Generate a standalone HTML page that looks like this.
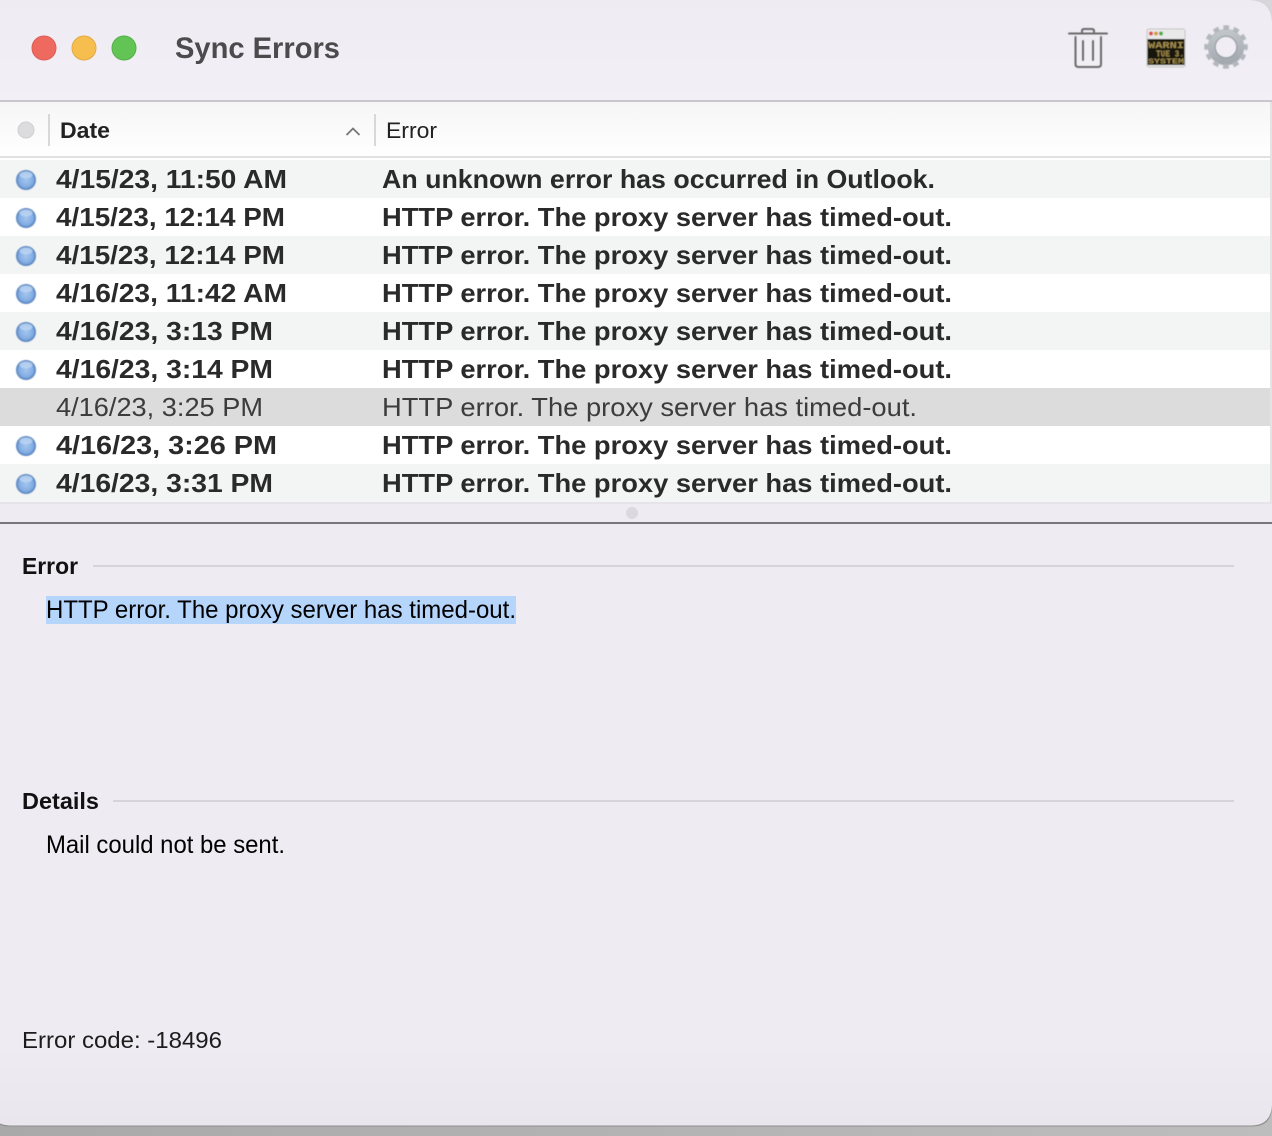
<!DOCTYPE html>
<html><head><meta charset="utf-8"><title>Sync Errors</title>
<style>html,body{margin:0;padding:0;width:1272px;height:1136px;overflow:hidden;background:#fff}svg{display:block}text{font-family:"Liberation Sans",sans-serif;white-space:pre}.b{font-size:26px;font-weight:700;fill:#2a2a2a}.r{font-size:26px;font-weight:400;fill:#3c3c3c}.m{font-family:"Liberation Mono",monospace;font-weight:700;fill:#a58e4e}</style></head>
<body>
<svg width="1272" height="1136" viewBox="0 0 1272 1136" xmlns="http://www.w3.org/2000/svg">
<defs>
<linearGradient id="bot" x1="0" x2="1" y1="0" y2="0"><stop offset="0" stop-color="#a9a9a9"/><stop offset="1" stop-color="#bdbdbd"/></linearGradient>
<linearGradient id="top" x1="0" x2="0" y1="0" y2="1"><stop offset="0" stop-color="#efebf3"/><stop offset="1" stop-color="#f2eff6"/></linearGradient>
<linearGradient id="hd" x1="0" x2="0" y1="0" y2="1"><stop offset="0" stop-color="#f6f6f6"/><stop offset=".6" stop-color="#fbfbfb"/><stop offset="1" stop-color="#ffffff"/></linearGradient>
<linearGradient id="win" x1="0" x2="0" y1="0" y2="1"><stop offset="0" stop-color="#eeebf2"/><stop offset=".93" stop-color="#eeebf2"/><stop offset="1" stop-color="#e9e6ed"/></linearGradient>
<radialGradient id="dot" cx=".5" cy=".5" r=".52"><stop offset="0" stop-color="#a4c5ee"/><stop offset=".68" stop-color="#82ade3"/><stop offset="1" stop-color="#4a76b2"/></radialGradient>
<linearGradient id="gear" x1="0" x2="0" y1="0" y2="1"><stop offset="0" stop-color="#c0c5ca"/><stop offset="1" stop-color="#a3a9af"/></linearGradient>
<filter id="s1" x="-20%" y="-20%" width="140%" height="140%"><feGaussianBlur stdDeviation="0.5"/></filter>
<filter id="s2" x="-20%" y="-20%" width="140%" height="140%"><feGaussianBlur stdDeviation="0.7"/></filter>
<g id="d" filter="url(#s1)"><circle cx="26" cy="20" r="10" fill="url(#dot)"/><ellipse cx="26" cy="15" rx="6.500" ry="3.500" fill="#c4dcf6" opacity=".7"/></g>
</defs>
<rect width="1272" height="1136" fill="url(#bot)"/>
<path d="M-10 0H1248Q1272 0 1272 24V1106Q1272 1126.500 1252 1126.500H10Q-10 1126.500 -10 1106Z" fill="#8e8e8e"/>
<path d="M-10 0H1248Q1272 0 1272 24V1105Q1271 1125 1252 1125.500H10Q-10 1125 -10 1105Z" fill="url(#win)"/>
<path d="M1248 0Q1272 0 1272 24V0Z" fill="#d8d6da"/>
<path d="M0 0H1248Q1272 0 1272 24V100H0Z" fill="url(#top)"/>
<rect y="100" width="1272" height="2" fill="#c9c7cd"/>

<circle cx="44" cy="48" r="12" fill="#ee6a5f" stroke="#dd5d52" stroke-width="1"/>
<circle cx="84" cy="48" r="12" fill="#f6bd4f" stroke="#e4a93f" stroke-width="1"/>
<circle cx="124" cy="48" r="12" fill="#61c454" stroke="#54b048" stroke-width="1"/>
<text x="175" y="58" font-size="30" font-weight="700" fill="#4b4b4e" textLength="165" lengthAdjust="spacingAndGlyphs">Sync Errors</text>

<g fill="none" stroke="#6a6a6a" stroke-width="2" stroke-linecap="round" stroke-linejoin="round" filter="url(#s1)">
<path d="M1069 33.500H1107"/>
<path d="M1082 33V31Q1082 29 1084 29H1092Q1094 29 1094 31V33"/>
<path d="M1075.500 37V64Q1075.500 67 1078.500 67H1098Q1101 67 1101 64V37"/>
<path d="M1083 41V60M1093 41V60"/>
</g>

<g filter="url(#s1)">
<rect x="1147" y="29" width="38" height="38" rx="2" fill="#e9e9ea" stroke="#c4c4c4" stroke-width="1"/>
<rect x="1147.500" y="39" width="37" height="26" fill="#17150f"/>
<circle cx="1151" cy="33.500" r="2" fill="#d9524a"/><circle cx="1156" cy="33.500" r="2" fill="#d99a3a"/><circle cx="1161" cy="33.500" r="2" fill="#55a84a"/>
<text class="m" x="1148" y="48" font-size="9" textLength="36" lengthAdjust="spacingAndGlyphs">WARNI</text>
<text class="m" x="1156" y="56.500" font-size="9" textLength="28" lengthAdjust="spacingAndGlyphs">TUE 3.</text>
<text class="m" x="1148" y="63.500" font-size="7" textLength="36" lengthAdjust="spacingAndGlyphs">SYSTEM</text>
</g>

<g fill="none" transform="rotate(-8 1226 47)" filter="url(#s1)">
<circle cx="1226" cy="47" r="14.500" stroke="url(#gear)" stroke-width="7.500"/>
<circle cx="1226" cy="47" r="19.500" stroke="#b2b7bc" stroke-width="4.500" stroke-dasharray="5.600 4.610"/>
<circle cx="1226" cy="47" r="10.800" stroke="#8e949a" stroke-width="1"/>
</g>

<rect y="102" width="1270" height="54" fill="url(#hd)"/>
<rect y="156" width="1270" height="2" fill="#e1e1e1"/>
<rect y="158" width="1270" height="2" fill="#fff"/>
<circle cx="26" cy="130" r="8" fill="#dcdcde" stroke="#cfcfd1" stroke-width="1"/>
<rect x="48" y="114" width="2" height="32" fill="#d8d8d8"/>
<rect x="374" y="114" width="2" height="32" fill="#d8d8d8"/>
<text x="60" y="138" font-size="22" font-weight="700" fill="#222" textLength="50" lengthAdjust="spacingAndGlyphs">Date</text>
<path d="M346.500 135L353 128.500L359.500 135" fill="none" stroke="#777" stroke-width="1.800"/>
<text x="386" y="138" font-size="22" fill="#222" textLength="51" lengthAdjust="spacingAndGlyphs">Error</text>

<g>
<rect y="160" width="1270" height="38" fill="#f3f5f4"/>
<rect y="198" width="1270" height="38" fill="#fff"/>
<rect y="236" width="1270" height="38" fill="#f3f5f4"/>
<rect y="274" width="1270" height="38" fill="#fff"/>
<rect y="312" width="1270" height="38" fill="#f3f5f4"/>
<rect y="350" width="1270" height="38" fill="#fff"/>
<rect y="388" width="1270" height="38" fill="#dcdcdc"/>
<rect y="426" width="1270" height="38" fill="#fff"/>
<rect y="464" width="1270" height="38" fill="#f3f5f4"/>
<rect x="1270" y="102" width="2" height="400" fill="#e4e4e4"/>
<rect y="502" width="1272" height="2" fill="#e6e4e8"/>
</g>

<use href="#d" y="160"/><use href="#d" y="198"/><use href="#d" y="236"/><use href="#d" y="274"/><use href="#d" y="312"/><use href="#d" y="350"/><use href="#d" y="426"/><use href="#d" y="464"/>

<text class="b" x="56" y="188" textLength="231" lengthAdjust="spacingAndGlyphs">4/15/23, 11:50 AM</text>
<text class="b" x="382" y="188" textLength="553" lengthAdjust="spacingAndGlyphs">An unknown error has occurred in Outlook.</text>
<text class="b" x="56" y="226" textLength="229" lengthAdjust="spacingAndGlyphs">4/15/23, 12:14 PM</text>
<text class="b" x="382" y="226" textLength="570" lengthAdjust="spacingAndGlyphs">HTTP error. The proxy server has timed-out.</text>
<text class="b" x="56" y="264" textLength="229" lengthAdjust="spacingAndGlyphs">4/15/23, 12:14 PM</text>
<text class="b" x="382" y="264" textLength="570" lengthAdjust="spacingAndGlyphs">HTTP error. The proxy server has timed-out.</text>
<text class="b" x="56" y="302" textLength="231" lengthAdjust="spacingAndGlyphs">4/16/23, 11:42 AM</text>
<text class="b" x="382" y="302" textLength="570" lengthAdjust="spacingAndGlyphs">HTTP error. The proxy server has timed-out.</text>
<text class="b" x="56" y="340" textLength="217" lengthAdjust="spacingAndGlyphs">4/16/23, 3:13 PM</text>
<text class="b" x="382" y="340" textLength="570" lengthAdjust="spacingAndGlyphs">HTTP error. The proxy server has timed-out.</text>
<text class="b" x="56" y="378" textLength="217" lengthAdjust="spacingAndGlyphs">4/16/23, 3:14 PM</text>
<text class="b" x="382" y="378" textLength="570" lengthAdjust="spacingAndGlyphs">HTTP error. The proxy server has timed-out.</text>
<text class="r" x="56" y="416" textLength="207" lengthAdjust="spacingAndGlyphs">4/16/23, 3:25 PM</text>
<text class="r" x="382" y="416" textLength="535" lengthAdjust="spacingAndGlyphs">HTTP error. The proxy server has timed-out.</text>
<text class="b" x="56" y="454" textLength="221" lengthAdjust="spacingAndGlyphs">4/16/23, 3:26 PM</text>
<text class="b" x="382" y="454" textLength="570" lengthAdjust="spacingAndGlyphs">HTTP error. The proxy server has timed-out.</text>
<text class="b" x="56" y="492" textLength="217" lengthAdjust="spacingAndGlyphs">4/16/23, 3:31 PM</text>
<text class="b" x="382" y="492" textLength="570" lengthAdjust="spacingAndGlyphs">HTTP error. The proxy server has timed-out.</text>

<circle cx="632" cy="513" r="6" fill="#dbd8df"/>
<rect y="522" width="1272" height="2" fill="#77767a"/>

<text x="22" y="574" font-size="23" font-weight="700" fill="#111" textLength="56" lengthAdjust="spacingAndGlyphs">Error</text>
<rect x="93" y="565" width="1141" height="2" fill="#d6d4da"/>
<rect x="46" y="596" width="470" height="28" fill="#b5d5fb"/>
<text x="46" y="618" font-size="25" fill="#000" textLength="470" lengthAdjust="spacingAndGlyphs">HTTP error. The proxy server has timed-out.</text>

<text x="22" y="809" font-size="23" font-weight="700" fill="#111" textLength="77" lengthAdjust="spacingAndGlyphs">Details</text>
<rect x="113" y="800" width="1121" height="2" fill="#d6d4da"/>
<text x="46" y="853" font-size="25" fill="#000" textLength="239" lengthAdjust="spacingAndGlyphs">Mail could not be sent.</text>

<text x="22" y="1048" font-size="23" fill="#1c1c1c" textLength="200" lengthAdjust="spacingAndGlyphs">Error code: -18496</text>
</svg>
</body></html>
